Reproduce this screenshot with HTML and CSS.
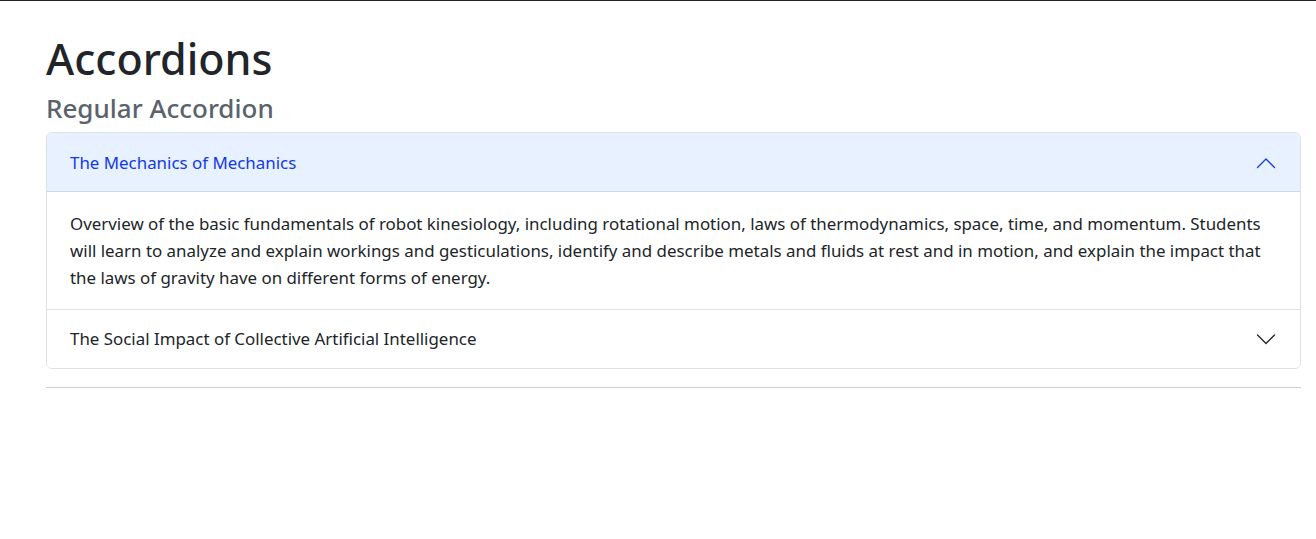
FILE: index.html
```html
<!DOCTYPE html>
<html lang="en">
<head>
<meta charset="utf-8">
<title>Accordions</title>
<link rel="stylesheet" href="styles.css">
</head>
<body>
<main class="page">
  <h1 class="title">Accordions</h1>
  <h4 class="subtitle">Regular Accordion</h4>
  <div class="accordion">
    <div class="acc-item">
      <button class="acc-button is-open" type="button">
        <span class="acc-label">The Mechanics of Mechanics</span>
        <svg class="acc-icon" viewBox="0 0 20 20" width="20" height="20" fill="none" stroke="currentColor" stroke-width="1.3" stroke-linecap="round" stroke-linejoin="round"><path d="M1.5 14.5 L10 6 L18.5 14.5"/></svg>
      </button>
      <div class="acc-body">Overview of the basic fundamentals of robot kinesiology, including rotational motion, laws of thermodynamics, space, time, and momentum. Students will learn to analyze and explain workings and gesticulations, identify and describe metals and fluids at rest and in motion, and explain the impact that the laws of gravity have on different forms of energy.</div>
    </div>
    <div class="acc-item">
      <button class="acc-button acc-button-last" type="button">
        <span class="acc-label">The Social Impact of Collective Artificial Intelligence</span>
        <svg class="acc-icon" viewBox="0 0 20 20" width="20" height="20" fill="none" stroke="currentColor" stroke-width="1.3" stroke-linecap="round" stroke-linejoin="round"><path d="M1.5 6 L10 14.5 L18.5 6"/></svg>
      </button>
    </div>
  </div>
  <hr class="divider">
</main>
</body>
</html>
```
FILE: styles.css
```css
html, body {
  margin: 0;
  padding: 0;
  background: #fff;
}
body {
  border-top: 1px solid #222;
  font-family: "Noto Sans", "Open Sans", sans-serif;
  color: #212529;
}
.page {
  padding: 32px 15px 0 46px;
}
.title {
  margin: 0 0 8px;
  font-size: 43px;
  line-height: 52px;
  font-weight: 500;
  color: #212529;
}
.subtitle {
  margin: 0 0 8px;
  font-size: 26px;
  line-height: 31px;
  font-weight: 500;
  color: #5a636c;
}
.accordion {
  border: 1px solid #dee2e6;
  border-radius: 6px;
  overflow: hidden;
}
.acc-item + .acc-item {
  border-top: 1px solid #dee2e6;
}
.acc-button {
  display: flex;
  align-items: center;
  width: 100%;
  margin: 0;
  padding: 16px 24px 16px 23px;
  border: 0;
  background: #fff;
  font-family: inherit;
  font-size: 16.9px;
  line-height: 27px;
  color: #212529;
  text-align: left;
  cursor: pointer;
}
.acc-button-last {
  padding-top: 15px;
}
.acc-button.is-open {
  background: #e7f1ff;
  color: #1439e6;
  box-shadow: inset 0 -1px 0 #cfd8e4;
}
.acc-label {
  flex: 1;
}
.acc-icon {
  flex: none;
  display: block;
}
.acc-body {
  padding: 18px 20px 18px 23px;
  font-size: 16.9px;
  line-height: 27px;
}
.divider {
  margin: 18px 0 0;
  border: 0;
  border-top: 1px solid #cfcfcf;
}
```
